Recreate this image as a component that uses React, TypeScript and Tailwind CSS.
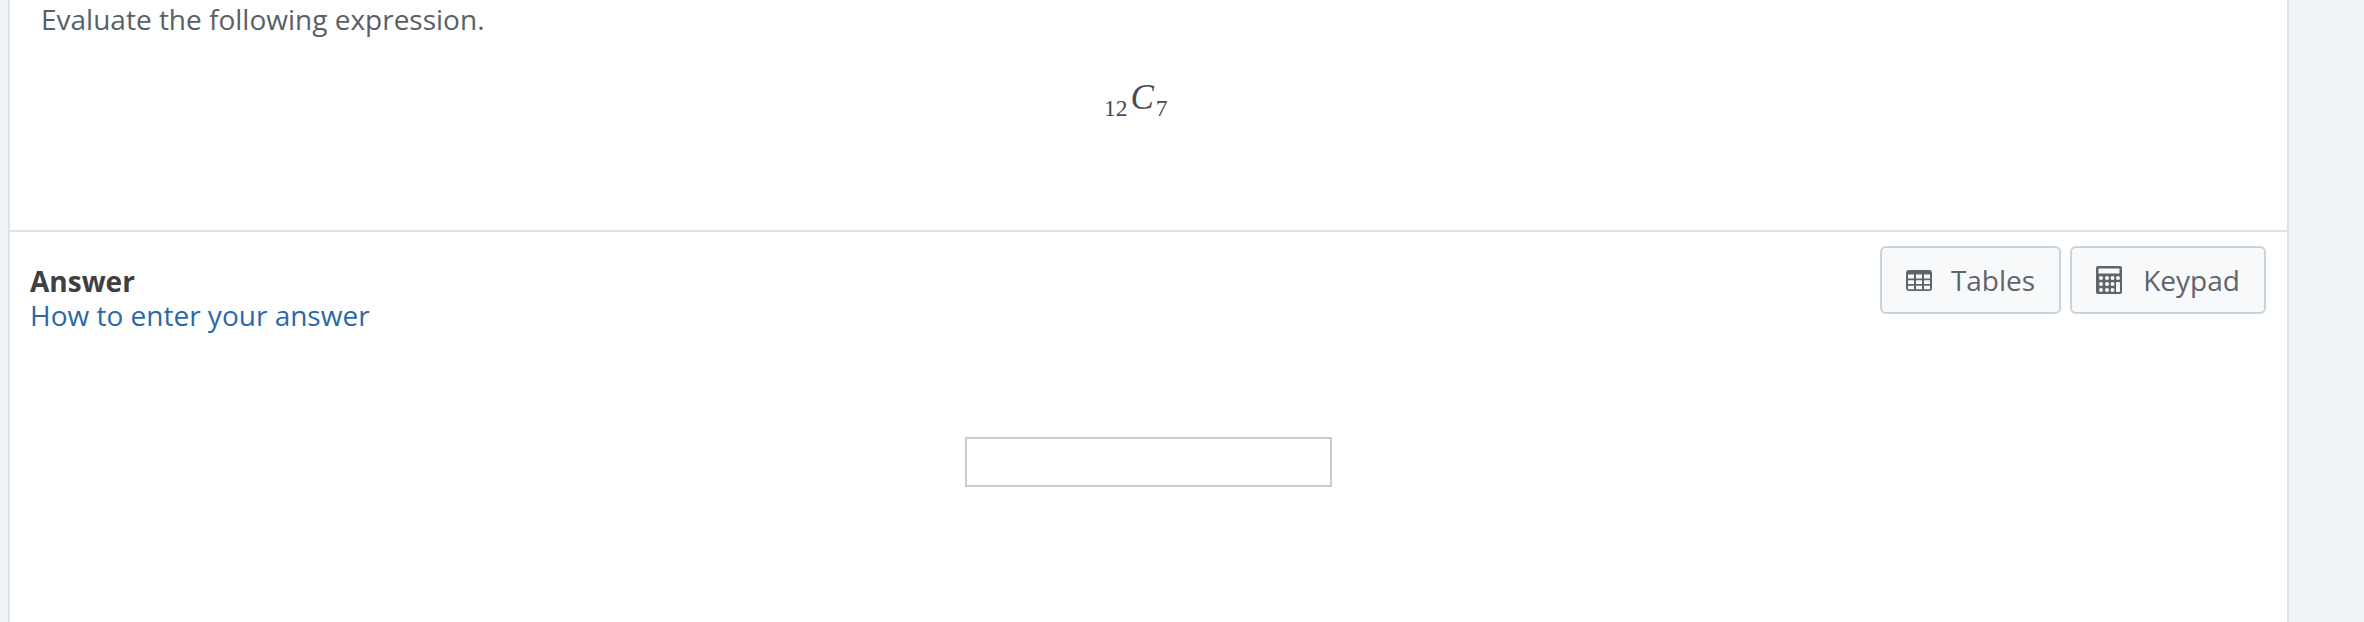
export default function App() {
  return (
    <div className="flex h-[622px] w-[2364px] overflow-hidden bg-[#f0f4f7] font-['Open_Sans',sans-serif]">
      <main className="ml-2 flex h-full w-[2281px] flex-col border-x-2 border-[#dde3e8] bg-white">
        <section className="h-[230px] shrink-0">
          <p className="ml-[31px] text-[28px] leading-[38px] text-[#5a5f66]">Evaluate the following expression.</p>
          <div className="mt-[43px] ml-[1094px] flex h-[40px] items-end font-['Liberation_Serif',serif] leading-none text-[#484b50]">
            <span className="mb-px text-[23.5px]">12</span>
            <span className="mb-[6px] ml-[3px] text-[35px] italic">C</span>
            <span className="mb-px ml-[2px] text-[23.5px]">7</span>
          </div>
        </section>
        <section className="flex-1 border-t-2 border-[#e0e2e4]">
          <div className="flex items-start justify-between pl-5 pr-[21px] pt-[14px]">
            <div className="pt-[19px]">
              <h2 className="text-[28px] leading-[33px] font-bold text-[#404043]">Answer</h2>
              <a className="block text-[28px] leading-[35px] text-[#2869aa]">How to enter your answer</a>
            </div>
            <div className="flex gap-[9px]">
              <button className="flex h-[68px] w-[181px] items-center justify-center gap-[19px] rounded-[6px] border-2 border-[#c9d5dd] bg-[#f7f9fb] text-[28px] text-[#5f646b]">
                <svg width="26" height="21" viewBox="0 0 26 21" fill="#5f646b">
                  <path fillRule="evenodd" d="M3 0h20a3 3 0 0 1 3 3v15a3 3 0 0 1-3 3H3a3 3 0 0 1-3-3V3a3 3 0 0 1 3-3ZM2 4.500v4h6v-4Zm8 0v4h6v-4Zm8 0v4h6v-4ZM2 10.200v3.800h6v-3.800Zm8 0v3.800h6v-3.800Zm8 0v3.800h6v-3.800ZM2 15.700v3.500h6v-3.500Zm8 0v3.500h6v-3.500Zm8 0v3.500h6v-3.500Z" />
                </svg>
                <span>Tables</span>
              </button>
              <button className="flex h-[68px] w-[196px] items-center justify-center gap-[21px] rounded-[6px] border-2 border-[#c9d5dd] bg-[#f7f9fb] text-[28px] text-[#5f646b]">
                <svg width="26" height="28" viewBox="0 0 26 28" fill="#5f646b">
                  <path fillRule="evenodd" d="M2 0h22a2 2 0 0 1 2 2v24a2 2 0 0 1-2 2H2a2 2 0 0 1-2-2V2a2 2 0 0 1 2-2Zm.500 2.500v5h21v-5ZM5 10a2 2 0 1 0 0 4 2 2 0 0 0 0-4Zm6 0a2 2 0 1 0 0 4 2 2 0 0 0 0-4Zm5.500 0a2 2 0 1 0 0 4 2 2 0 0 0 0-4Zm5.500 0a2 2 0 1 0 0 4 2 2 0 0 0 0-4ZM5 16a2 2 0 1 0 0 4 2 2 0 0 0 0-4Zm6 0a2 2 0 1 0 0 4 2 2 0 0 0 0-4Zm5.500 0a2 2 0 1 0 0 4 2 2 0 0 0 0-4Zm4.500 0a1 1 0 0 0-1 1v8a1 1 0 0 0 1 1h2a1 1 0 0 0 1-1v-8a1 1 0 0 0-1-1ZM5 22a2 2 0 1 0 0 4 2 2 0 0 0 0-4Zm6 0a2 2 0 1 0 0 4 2 2 0 0 0 0-4Zm5.500 0a2 2 0 1 0 0 4 2 2 0 0 0 0-4Z" />
                </svg>
                <span>Keypad</span>
              </button>
            </div>
          </div>
          <div className="mt-[104px] ml-[955px] h-[50px] w-[367px] border-2 border-[#cbcbcb] bg-white" />
        </section>
      </main>
    </div>
  );
}
